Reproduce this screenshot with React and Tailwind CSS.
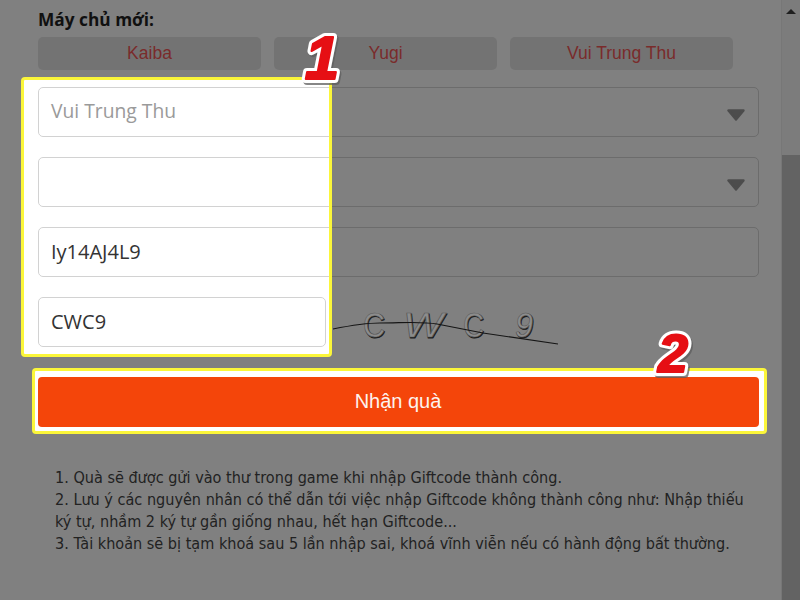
const sans = "font-['Open_Sans','Noto_Sans',sans-serif]";

function Arrow() {
  return (
    <svg width="18" height="12" viewBox="0 0 18 12" className="mt-[5px] shrink-0">
      <path d="M1.5 1.5H16.5L9 10.5Z" fill="#4c4c4c" stroke="#4c4c4c" strokeWidth="2.4" strokeLinejoin="round" />
    </svg>
  );
}

function Numeral({ children, size, className }) {
  const common = {
    x: 45,
    y: 66,
    textAnchor: "middle",
    fontFamily: "'Liberation Sans', sans-serif",
    fontWeight: 700,
    fontStyle: "italic",
    fontSize: size,
    strokeLinejoin: "round",
  };
  return (
    <svg width="90" height="90" viewBox="0 0 90 90" className={className}>
      <text {...common} fill="#5e5e5e" stroke="#5e5e5e" strokeWidth="8" transform="translate(1.5 2)" opacity="0.75">{children}</text>
      <text {...common} fill="#ffffff" stroke="#ffffff" strokeWidth="8">{children}</text>
      <text {...common} fill="#e60f14" stroke="#e60f14" strokeWidth="2">{children}</text>
    </svg>
  );
}

function Captcha() {
  const glyph = { fontFamily: "'Liberation Sans', sans-serif", fontSize: 35, lengthAdjust: "spacingAndGlyphs" };
  const letters = (
    <>
      <text {...glyph} x="31" y="45" textLength="22">C</text>
      <text {...glyph} x="71" y="45" textLength="40" fontStyle="italic">W</text>
      <text {...glyph} x="131" y="45" textLength="21">C</text>
      <text {...glyph} x="183" y="45" textLength="18" fontStyle="italic">9</text>
    </>
  );
  return (
    <svg width="240" height="60" viewBox="0 0 240 60" className="ml-[6px]">
      <g fill="#1c1c1c" stroke="#1c1c1c" strokeWidth="0.8" transform="translate(0.8 0.9)">{letters}</g>
      <g fill="#8c8c8c" stroke="#5a5a5a" strokeWidth="0.6">{letters}</g>
      <path d="M1 37C16 34 33 31 48 31C70 31 88 29 105 32C120 35 135 38 151 41L226 52" fill="none" stroke="#151515" strokeWidth="1.1" />
    </svg>
  );
}

const dimRow = "h-[50px] rounded-[5px] border border-[#6c6c6c] flex items-center justify-end pr-[13px]";
const liteRow = "h-[50px] w-[400px] rounded-[5px] border border-[#d2d2d2] flex items-center pl-[12px] text-[20px] leading-none";

export default function App() {
  return (
    <div className={`relative flex h-[600px] w-[800px] overflow-hidden bg-[#808080] ${sans}`}>
      <main className="w-[781px] shrink-0 pl-[38px] pr-[22px] pt-[9px]">
        <h2 className="h-[25px] text-[17.3px] font-bold leading-[22px] text-[#101010]">Máy chủ mới:</h2>
        <div className="mt-[3px] flex gap-[13px] pr-[26px] font-['Liberation_Sans',sans-serif]">
          {["Kaiba", "Yugi", "Vui Trung Thu"].map((t) => (
            <div key={t} className="flex h-[33px] w-[223px] items-center justify-center rounded-[5px] bg-[#737373] text-[17.5px] text-[#7a2b2b]">{t}</div>
          ))}
        </div>
        <div className="mt-[17px] flex flex-col gap-[20px]">
          <div className={dimRow}><Arrow /></div>
          <div className={dimRow}><Arrow /></div>
          <div className={dimRow} />
          <div className="flex h-[50px] items-center pl-[288px]"><Captcha /></div>
        </div>
        <div className="ml-[-6px] mr-[-8px] mt-[21px] rounded-[4px] border-[3px] border-[#fbf63a] bg-white pb-[4px] pl-[3px] pr-[5px] pt-[6px]">
          <button className="flex h-[50px] w-full items-center justify-center rounded-[4px] bg-[#f4450a] pb-[2px] pr-[1px] font-['Liberation_Sans',sans-serif] text-[20px] text-[#fdf3ee]">Nhận quà</button>
        </div>
        <ol className="mt-[33px] pl-[17px] pr-[4px] font-['DejaVu_Sans_Condensed','DejaVu_Sans',sans-serif] text-[16.08px] leading-[22px] text-[#222222]">
          <li>1. Quà sẽ được gửi vào thư trong game khi nhập Giftcode thành công.</li>
          <li>2. Lưu ý các nguyên nhân có thể dẫn tới việc nhập Giftcode không thành công như: Nhập thiếu ký tự, nhầm 2 ký tự gần giống nhau, hết hạn Giftcode...</li>
          <li>3. Tài khoản sẽ bị tạm khoá sau 5 lần nhập sai, khoá vĩnh viễn nếu có hành động bất thường.</li>
        </ol>
      </main>

      <aside className="flex w-[19px] flex-col border-l border-[#777777] bg-[#7c7c7c]">
        <div className="flex h-[155px] justify-center pt-[9px]">
          <svg width="10" height="5" viewBox="0 0 10 5"><path d="M5 0L10 5H0Z" fill="#1f1f1f" /></svg>
        </div>
        <div className="flex-1 bg-[#636363]" />
      </aside>

      <div className="absolute left-[21px] top-[77px] h-[280px] w-[311px] overflow-hidden rounded-[4px] border-[3px] border-[#fbf63a] bg-white pl-[14px] pt-[7px] text-[#333333]">
        <div className="flex flex-col gap-[20px]">
          <div className={`${liteRow} pb-[2px] !text-[19.3px] text-[#9a9a9a]`}>Vui Trung Thu</div>
          <div className={liteRow} />
          <div className={liteRow}>Iy14AJ4L9</div>
          <div className={`${liteRow} !w-[288px]`}>CWC9</div>
        </div>
      </div>

      <Numeral size={62} className="absolute left-[277px] top-[13px]">1</Numeral>
      <Numeral size={54} className="absolute left-[628px] top-[306px]">2</Numeral>
    </div>
  );
}
